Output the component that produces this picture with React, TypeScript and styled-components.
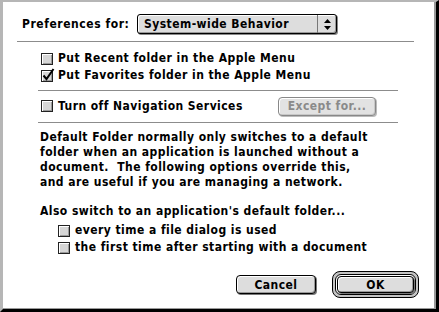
import React from "react";
import styled, { createGlobalStyle } from "styled-components";

const FONT = `"DejaVu Sans Condensed", "DejaVu Sans", sans-serif`;
const LS = "0.45px";

const Global = createGlobalStyle`
  html, body { margin: 0; padding: 0; background: #fff; }
  body { font-family: ${FONT}; }
`;

const Frame = styled.div`
  width: 439px;
  height: 312px;
  box-sizing: border-box;
  border-top: 2px solid #b6b6b6;
  border-left: 3px solid #b6b6b6;
  border-right: 3px solid #000;
  border-bottom: 3px solid #000;
  display: flex;
`;

const Panel = styled.div`
  flex: 1;
  background: #fff;
  border-right: 2px solid #9a9a9a;
  border-bottom: 1px solid #9a9a9a;
  display: flex;
  flex-direction: column;
  font: bold 12px ${FONT};
  color: #000;
  line-height: 15px;
`;

const HeaderRow = styled.div`
  display: flex;
  align-items: center;
  height: 20px;
  margin: 12px 0 0 19px;
`;

const Label = styled.span`
  width: 115px;
  letter-spacing: 0.55px;
`;

const Popup = styled.div`
  box-sizing: content-box;
  width: 198px;
  height: 18px;
  border: 1px solid #000;
  border-radius: 3px;
  background: #dddddd;
  box-shadow: inset 1px 1px 0 #fff, inset -1px -1px 0 #999, 1px 1px 0 #888;
  display: flex;
  align-items: center;
`;

const PopupText = styled.span`
  flex: 1;
  padding-left: 6px;
  letter-spacing: ${LS};
`;

const PopupArrows = styled.span`
  width: 18px;
  height: 18px;
  border-left: 1px solid #777;
  display: flex;
  align-items: center;
  justify-content: center;
`;

const Rule = styled.div<{ $left: number; $width: number; $top: number }>`
  height: 1px;
  background: #8c8c8c;
  margin-left: ${(p) => p.$left}px;
  margin-top: ${(p) => p.$top}px;
  width: ${(p) => p.$width}px;
`;

const CheckRow = styled.div<{ $left: number; $top: number; $height?: number; $width?: number }>`
  display: flex;
  align-items: center;
  height: ${(p) => p.$height ?? 17}px;
  margin-left: ${(p) => p.$left}px;
  margin-top: ${(p) => p.$top}px;
  width: ${(p) => (p.$width ? `${p.$width}px` : "auto")};
  letter-spacing: ${LS};
`;

const Box = styled.span`
  position: relative;
  width: 10px;
  height: 10px;
  border: 1px solid #222;
  background: #d6d6d6;
  box-shadow: inset 1px 1px 0 #fff, inset -1px -1px 0 #9a9a9a;
  margin-right: 5px;
  flex: none;
`;

const Check = styled.svg`
  position: absolute;
  left: 0px;
  top: -3px;
`;

const Checkbox = ({ checked }: { checked?: boolean }) => (
  <Box>
    {checked && (
      <Check width="13" height="14" viewBox="0 0 13 14">
        <path d="M1.5 7.5 L4.5 11 L11.5 1" stroke="#000" strokeWidth="2" fill="none" />
      </Check>
    )}
  </Box>
);

const Spacer = styled.span`
  flex: 1;
`;

const Button = styled.button<{ $disabled?: boolean; $w: number; $fill?: boolean }>`
  box-sizing: border-box;
  width: ${(p) => p.$w}px;
  height: ${(p) => (p.$fill ? "auto" : "19px")};
  flex: ${(p) => (p.$fill ? 1 : "none")};
  border: 1px solid ${(p) => (p.$disabled ? "#888" : "#000")};
  border-radius: 4px;
  background: ${(p) => (p.$disabled ? "#e2e2e2" : "#dddddd")};
  box-shadow: inset 1px 1px 0 #fff, inset -1px -1px 0 ${(p) => (p.$disabled ? "#c8c8c8" : "#9a9a9a")},
    1px 1px 0 ${(p) => (p.$disabled ? "#bbb" : "#777")};
  font: bold 12px ${FONT};
  letter-spacing: ${LS};
  color: ${(p) => (p.$disabled ? "#8a8a8a" : "#000")};
  padding: 0;
  display: flex;
  align-items: center;
  justify-content: center;
`;

const Para = styled.p<{ $top: number }>`
  margin: ${(p) => p.$top}px 0 0 37px;
  letter-spacing: ${LS};
  white-space: pre;
`;

const ButtonRow = styled.div`
  margin-top: auto;
  margin-bottom: 10px;
  margin-right: 15px;
  display: flex;
  justify-content: flex-end;
  align-items: center;
  gap: 16px;
`;

const Ring = styled.div`
  box-sizing: border-box;
  width: 87px;
  height: 27px;
  border: 1px solid #000;
  border-radius: 8px;
  background: #c4c4c4;
  padding: 2px;
  display: flex;
`;

const InnerRing = styled.div`
  flex: 1;
  border: 1px solid #000;
  border-radius: 6px;
  background: #fff;
  padding: 1px;
  display: flex;
`;

export default function App() {
  return (
    <>
      <Global />
      <Frame>
        <Panel>
          <HeaderRow>
            <Label>Preferences for:</Label>
            <Popup>
              <PopupText>System-wide Behavior</PopupText>
              <PopupArrows>
                <svg width="7" height="11" viewBox="0 0 7 11">
                  <path d="M3.5 0 L7 4 L0 4 Z" fill="#000" />
                  <path d="M0 7 L7 7 L3.5 11 Z" fill="#000" />
                </svg>
              </PopupArrows>
            </Popup>
          </HeaderRow>
          <Rule $left={14} $width={397} $top={7} />
          <CheckRow $left={38} $top={8}>
            <Checkbox />
            Put Recent folder in the Apple Menu
          </CheckRow>
          <CheckRow $left={38} $top={0}>
            <Checkbox checked />
            Put Favorites folder in the Apple Menu
          </CheckRow>
          <Rule $left={35} $width={360} $top={6} />
          <CheckRow $left={38} $top={5} $height={20} $width={335}>
            <Checkbox />
            Turn off Navigation Services
            <Spacer />
            <Button $disabled $w={98}>Except for...</Button>
          </CheckRow>
          <Rule $left={35} $width={360} $top={6} />
          <Para $top={7}>
            {"Default Folder normally only switches to a default\nfolder when an application is launched without a\ndocument.  The following options override this,\nand are useful if you are managing a network."}
          </Para>
          <Para $top={14}>Also switch to an application's default folder...</Para>
          <CheckRow $left={55} $top={3}>
            <Checkbox />
            every time a file dialog is used
          </CheckRow>
          <CheckRow $left={55} $top={0}>
            <Checkbox />
            the first time after starting with a document
          </CheckRow>
          <ButtonRow>
            <Button $w={80}>Cancel</Button>
            <Ring>
              <InnerRing>
                <Button $w={77} $fill>OK</Button>
              </InnerRing>
            </Ring>
          </ButtonRow>
        </Panel>
      </Frame>
    </>
  );
}
